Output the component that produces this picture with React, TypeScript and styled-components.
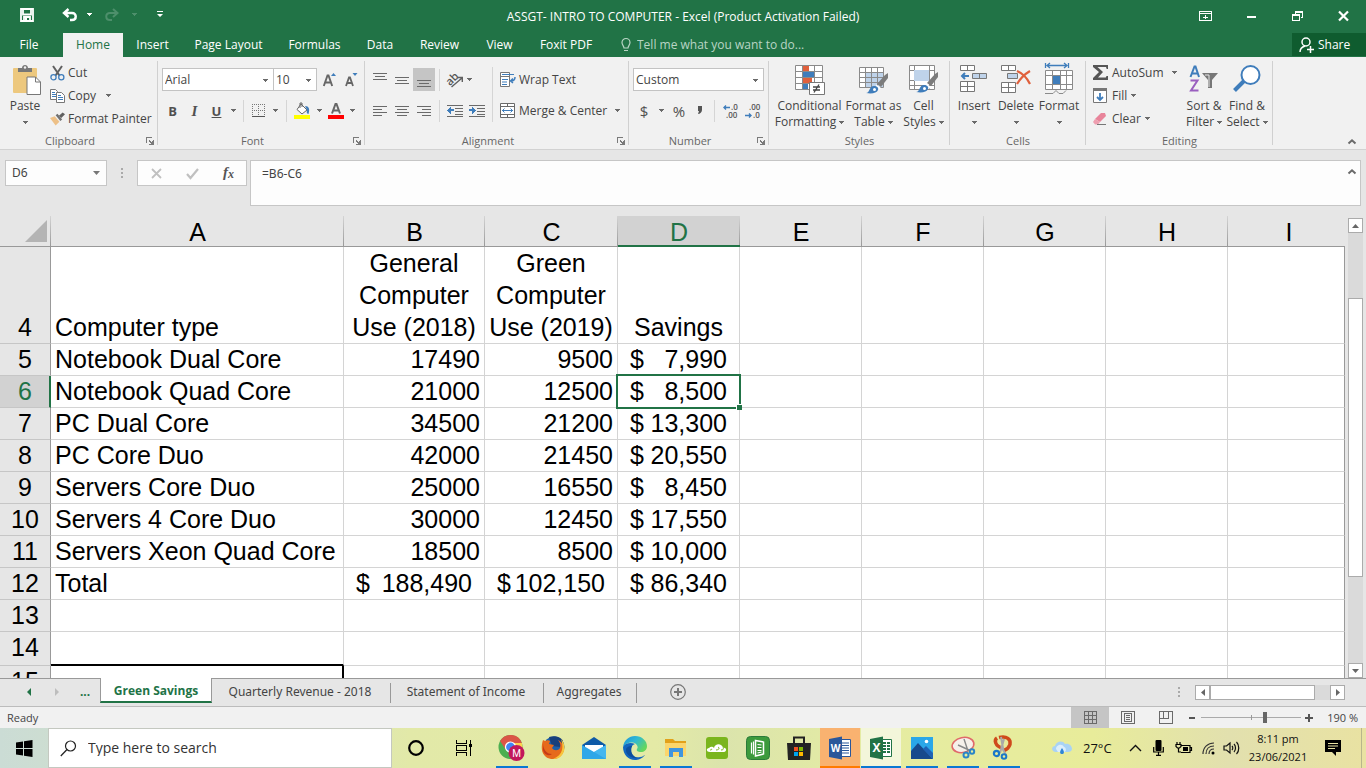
import React from "react";
import styled, { createGlobalStyle, css } from "styled-components";

const GREEN = "#217346";
const BLUE = "#3f7dbb";
const GREY = "#6a6a6a";

const Global = createGlobalStyle`
  *, *::before, *::after { box-sizing: border-box; }
  body { margin: 0; overflow: hidden; }
  button, input, select, textarea { font: inherit; color: inherit; margin: 0; padding: 0; border: 0; background: none; outline: none; border-radius: 0; }
  svg { display: block; flex: none; overflow: visible; }
`;

const Page = styled.div`
  display: flex;
  flex-direction: column;
  height: 100vh;
  background: #e6e6e6;
  color: #444;
  font: 12px/16px "Open Sans", "Noto Sans", sans-serif;
  white-space: nowrap;
`;

/* ---------- title bar and tabs ---------- */

const TitleBar = styled.header`
  display: grid;
  grid-template-columns: 1fr auto 1fr;
  align-items: center;
  height: 33px;
  background: ${GREEN};
  color: #fff;
`;
const QuickAccess = styled.div`
  display: flex;
  align-items: center;
  padding-bottom: 4px;
`;
const Title = styled.h1`
  margin: 0;
  font: 400 12px/16px "Open Sans", sans-serif;
`;
const WindowButtons = styled.div`
  display: flex;
  justify-content: flex-end;
  padding-bottom: 2px;
`;
const IconButton = styled.button<{ $w?: number; $h?: number; $on?: boolean }>`
  display: flex;
  align-items: center;
  justify-content: center;
  flex: none;
  width: ${(p) => p.$w ?? 22}px;
  height: ${(p) => p.$h ?? 23}px;
  background: ${(p) => (p.$on ? "#c5c5c5" : "none")};
`;
const TabBar = styled.nav`
  display: flex;
  height: 24px;
  background: ${GREEN};
  color: #fff;
`;
const RibbonTab = styled.button<{ $w: number; $active?: boolean }>`
  width: ${(p) => p.$w}px;
  height: 24px;
  text-align: center;
  ${(p) => p.$active && css`margin-left: 5px; background: #f1f1f1; color: ${GREEN};`}
`;
const TellMe = styled.label`
  display: flex;
  align-items: center;
  gap: 6px;
  flex: 1;
  padding-left: 15px;
  color: #b9d5c5;
  input { width: 200px; }
  input::placeholder { color: #b9d5c5; opacity: 1; }
`;
const Share = styled.button`
  display: flex;
  align-items: center;
  gap: 4px;
  width: 74px;
  padding-left: 7px;
  height: 23px;
  background: #0f5c2f;
`;

/* ---------- ribbon ---------- */

const Ribbon = styled.section`
  display: flex;
  height: 93px;
  background: #f1f1f1;
  border-bottom: 1px solid #d2d2d2;
`;
const GroupBox = styled.div<{ $w: number }>`
  display: flex;
  flex-direction: column;
  flex: none;
  width: ${(p) => p.$w}px;
  padding-top: 4px;
  background: linear-gradient(#d0d0d0, #d0d0d0) right 4px / 1px 84px no-repeat;
`;
const GroupBody = styled.div`
  display: flex;
  flex: 1;
  padding-left: 4px;
`;
const GroupFoot = styled.div`
  display: flex;
  align-items: center;
  height: 16px;
  color: #666;
  font-size: 11px;
  text-align: center;
  span { flex: 1; }
`;
const Launcher = styled.button`
  width: 12px;
  height: 9px;
  margin-left: 6px;
`;
const Rows = styled.div<{ $top?: number; $gap?: number; $left?: number; $w?: number }>`
  display: flex;
  flex-direction: column;
  width: ${(p) => (p.$w ? p.$w + "px" : "auto")};
  padding-top: ${(p) => p.$top ?? 0}px;
  padding-left: ${(p) => p.$left ?? 0}px;
  gap: ${(p) => p.$gap ?? 0}px;
`;
const Row = styled.div`
  display: flex;
  align-items: center;
  height: 23px;
`;
const Rule = styled.span<{ $m: string; $h?: number }>`
  flex: none;
  width: 1px;
  height: ${(p) => p.$h ?? 22}px;
  margin: ${(p) => p.$m};
  background: #d5d5d5;
`;
const TextButton = styled.button<{ $gap?: number }>`
  display: flex;
  align-items: center;
  height: 23px;
  gap: ${(p) => p.$gap ?? 4}px;
`;
const BigButton = styled.button<{ $w: number }>`
  display: flex;
  flex-direction: column;
  align-items: center;
  flex: none;
  width: ${(p) => p.$w}px;
  height: 72px;
  padding-top: 1px;
  line-height: 16px;
`;
const BigIcon = styled.span<{ $top?: number }>`
  display: flex;
  height: 36px;
  padding-top: ${(p) => p.$top ?? 3}px;
`;
const WithCaret = styled.span`
  display: flex;
  align-items: center;
  gap: 3px;
  height: 16px;
`;
const Combo = styled.label<{ $w: number; $join?: boolean }>`
  display: block;
  position: relative;
  flex: none;
  width: ${(p) => p.$w}px;
  height: 23px;
  margin-left: ${(p) => (p.$join ? -1 : 0)}px;
  border: 1px solid #c3c3c3;
  background: #fff;
  select { width: 100%; height: 21px; padding-left: 2px; appearance: none; }
  svg { position: absolute; right: 5px; top: 10px; pointer-events: none; }
`;
const Letter = styled.button<{ $w: number; $kind: "b" | "i" | "u" | "plain" }>`
  width: ${(p) => p.$w}px;
  height: 22px;
  font-size: 13px;
  color: #505050;
  font-weight: ${(p) => (p.$kind === "plain" ? 400 : 700)};
  ${(p) => p.$kind === "i" && css`font-family: "Liberation Serif", serif; font-style: italic; font-size: 15px;`}
  ${(p) => p.$kind === "u" && css`text-decoration: underline;`}
  ${(p) => p.$kind === "plain" && css`font-size: 15px;`}
`;
const Spacer = styled.div`
  flex: 1;
`;
const Collapse = styled.div`
  display: flex;
  flex: 1;
  align-items: flex-end;
  justify-content: flex-end;
  padding: 0 4px 1px 0;
`;

const Caret = ({ c = "#6a6a6a" }: { c?: string }) => (
  <svg width="5" height="3" viewBox="0 0 5 3" shapeRendering="crispEdges"><path d="M0 0h5v1H4v1H3v1H2V2H1V1H0z" fill={c} /></svg>
);
const CaretButton = ({ w = 12, label, c }: { w?: number; label: string; c?: string }) => (
  <IconButton $w={w} aria-label={label}><Caret c={c} /></IconButton>
);
const ChevronUp = () => (
  <svg width="10" height="7" viewBox="0 0 10 7"><path d="M1.500 5.500L5 2.300l3.500 3.200" fill="none" stroke="#6a6a6a" strokeWidth="2" /></svg>
);

function Group({ name, w, launcher, children }: { name: string; w: number; launcher?: boolean; children: React.ReactNode }) {
  return (
    <GroupBox $w={w}>
      <GroupBody>{children}</GroupBody>
      <GroupFoot>
        <span>{name}</span>
        {launcher && (
          <Launcher aria-label={name + " settings"}>
            <svg width="8" height="8" viewBox="0 0 8 8" shapeRendering="crispEdges">
              <path d="M0 0h6v1H1v5H0zM3 3h1v1h1v1h1V4h1V3h1v5H3V7h2V6H4V5H3z" fill="#7a7a7a" />
            </svg>
          </Launcher>
        )}
      </GroupFoot>
    </GroupBox>
  );
}

/* line-set icons for alignment and indent: [x, y, width] per line */
const Lines = ({ w = 14, h = 14, set, children }: { w?: number; h?: number; set: number[][]; children?: React.ReactNode }) => (
  <svg width={w} height={h} viewBox={`0 0 ${w} ${h}`} shapeRendering="crispEdges">
    {set.map(([x, y, l], i) => <rect key={i} x={x} y={y} width={l} height="1" fill="#6a6a6a" />)}
    {children}
  </svg>
);

const Brush = ({ x, y }: { x: number; y: number }) => (
  <g transform={`translate(${x} ${y})`}>
    <path d="M22 0v5l-7 9-4-3L19 2z" fill="#7c7c7c" />
    <path d="M10.500 11.500l4.500 3.500-2 2-4-3z" fill="#fff" />
    <path d="M0 20c4 0 3-7 8-7 3 0 5 2 4 4-1 3-6 4-12 3z" fill={BLUE} />
    <circle cx="8.500" cy="16.500" r="1.500" fill="#fff" />
  </g>
);

const PasteIcon = () => (
  <svg width="33" height="31" viewBox="-4 0 33 31">
    <rect x="0" y="3" width="24" height="25" rx="1" fill="#edc87e" />
    <path d="M5 7V3h4c0-4 6-4 6 0h4v4z" fill="#777" /><circle cx="12" cy="2.500" r="1.200" fill="#f1f1f1" />
    <path d="M14 12h8.500l5 5v12.500H14z" fill="#fff" stroke="#777" /><path d="M22.500 12v5h5" fill="none" stroke="#777" />
  </svg>
);
const CutIcon = () => (
  <svg width="15" height="16" viewBox="0 0 15 16" fill="none">
    <path d="M3 1l6.500 9.500M12 1L5.500 10.500" stroke="#606060" strokeWidth="2" />
    <circle cx="3.500" cy="12.300" r="2.600" stroke={BLUE} strokeWidth="1.300" /><circle cx="11.300" cy="12.300" r="2.600" stroke={BLUE} strokeWidth="1.300" />
  </svg>
);
const CopyIcon = () => (
  <svg width="15" height="14" viewBox="0 0 15 14">
    <path d="M.5.500h5l2 2v8h-7z" fill="#fff" stroke="#777" />
    <path d="M2 3.500h3M2 5.500h4M2 7.500h4" stroke={BLUE} />
    <path d="M6.500 3.500h5l3 3v7h-8z" fill="#fff" stroke="#777" />
    <path d="M8 6.500h3M8 8.500h5M8 10.500h5" stroke={BLUE} />
  </svg>
);
const PainterIcon = () => (
  <svg width="15" height="14" viewBox="0 0 16 14">
    <path d="M0 6l5-2 5 6-4 4z" fill="#edc087" /><path d="M6 3l2-1.500 5 6L11 9z" fill="#707070" />
    <path d="M9.500 3.500l4-3.500L16 2l-4 4z" fill="#606060" />
  </svg>
);
const GrowIcon = ({ small }: { small?: boolean }) => (
  <svg width="14" height="16" viewBox="0 0 14 16">
    {small
      ? <><path d="M1 14l3-8.500h1L8 14M2.300 11h4.500" fill="none" stroke="#666" strokeWidth="1.800" /><path d="M7.500 1h5L10 4z" fill={BLUE} /></>
      : <><path d="M.8 14L4.500 3.500h1L9.200 14M2.300 10.500h5.500" fill="none" stroke="#666" strokeWidth="1.900" /><path d="M8 4h5l-2.500-3z" fill={BLUE} /></>}
  </svg>
);
const BorderIcon = () => (
  <svg width="14" height="14" viewBox="0 0 14 14" shapeRendering="crispEdges">
    <path d="M0 .5h14M0 6.500h14M.5 0v13M6.500 0v13M12.500 0v13" stroke="#777" strokeDasharray="1 1" /><path d="M0 12h13v1H0z" fill="#555" />
  </svg>
);
const FillIcon = () => (
  <svg width="16" height="17" viewBox="0 0 16 17">
    <path d="M7 2l6 6-5 4-5-4.500z" fill="#fff" stroke="#666" /><path d="M6 6V1h2v4" fill="none" stroke="#666" />
    <path d="M11 4c4 0 5 3 3.500 8-2 0-2-3-1.500-4z" fill={BLUE} /><path d="M0 13h16v4H0z" fill="#ff0" />
  </svg>
);
const FontColorIcon = () => (
  <svg width="16" height="17" viewBox="0 0 16 17">
    <path d="M4 11.500L7.500 2h1L12 11.500M5.500 8.500h5" fill="none" stroke="#666" strokeWidth="2" /><path d="M0 13h16v4H0z" fill="red" />
  </svg>
);
const OrientIcon = () => (
  <svg width="18" height="18" viewBox="0 0 18 18">
    <text x="0" y="12" transform="rotate(-45 6 9)" fontFamily="Open Sans, sans-serif" fontSize="11" fontWeight="600" fill="#555">ab</text>
    <path d="M5.500 16L16 7M11.500 6.500H16.300V11" fill="none" stroke="#606060" strokeWidth="1.400" />
  </svg>
);
const IndentIcon = ({ right }: { right?: boolean }) => (
  <Lines w={16} h={14} set={[[0, 1, 16], [8, 4, 8], [8, 7, 8], [8, 10, 8], [0, 12, 16]]}>
    {right
      ? <path d="M0 5h3V3h1v1h1v1h1v1h1v1H6v1H5v1H4v1H3V7H0z" fill={BLUE} />
      : <path d="M7 5H4V3H3v1H2v1H1v1H0v1h1v1h1v1h1v1h1V7h3z" fill={BLUE} />}
  </Lines>
);
const WrapIcon = () => (
  <svg width="16" height="16" viewBox="0 0 16 16">
    <path d="M.5.500h9v14h-9z" fill="#fff" stroke="#777" /><path d="M0 4.500h10" stroke="#777" />
    <path d="M2 2.500h12M2 7.500h6M2 10h5M2 12.500h5" stroke={BLUE} /><path d="M15 5c0 3-1 4-4 4M13 6.500L10.500 9l2.500 2" fill="none" stroke={BLUE} strokeWidth="1.500" />
  </svg>
);
const MergeIcon = () => (
  <svg width="15" height="15" viewBox="0 0 15 15">
    <path d="M.5.500h14v14H.5zM.5 3.500h14M.5 11.500h14M7.500 0v3M7.500 12v3" fill="#fff" stroke="#6a6a6a" />
    <path d="M2 7.500h11M4.500 5.500l-2 2 2 2M10.500 5.500l2 2-2 2" fill="none" stroke={BLUE} />
  </svg>
);
const DecimalIcon = ({ dec }: { dec?: boolean }) => (
  <svg width="16" height="16" viewBox="0 0 16 16" fontFamily="Open Sans, sans-serif" fontSize="8" fontWeight="600" fill="#555">
    <text x={dec ? 4 : 8} y="7">{dec ? ".00" : ".0"}</text><text x={dec ? 8 : 3} y="15">{dec ? ".0" : ".00"}</text>
    {dec
      ? <path d="M0 12.500h6M4 10.500l2 2-2 2" fill="none" stroke={BLUE} strokeWidth="1.400" />
      : <path d="M7 4.500H1M3 2.500l-2 2 2 2" fill="none" stroke={BLUE} strokeWidth="1.400" />}
  </svg>
);
const CondIcon = () => (
  <svg width="30" height="31" viewBox="0 0 30 31">
    <path d="M.5.500h27v24H.5z" fill="#fff" />
    <path d="M8 1h6v5H8zM8 13h9v5H8z" fill="#e0603c" /><path d="M8 7h11v5H8zM8 19h5v5H8z" fill={BLUE} />
    <path d="M.5.500h27v24H.5zM.5 6.500h27M.5 12.500h27M.5 18.500h27M7.500 0v24M19.500 0v24" fill="none" stroke="#8a8a8a" />
    <path d="M14.500 17.500h15v12h-15z" fill="#fff" stroke="#777" /><path d="M18 22h7M18 25h7M24 19.500l-5 8" stroke="#444" strokeWidth="1.300" />
  </svg>
);
const TableFormatIcon = () => (
  <svg width="29" height="31" viewBox="0 0 29 31">
    <path d="M.5 2.500h24v20H.5z" fill="#fff" /><path d="M7 7h17v15H7z" fill="#bfd3ea" />
    <path d="M.5 2.500h24v20H.5zM.5 7.500h24M.5 12.500h24M.5 17.500h24M6.500 2v20M12.500 2v20M18.500 2v20" fill="none" stroke="#8a8a8a" />
    <Brush x={7} y={8} />
  </svg>
);
const CellStylesIcon = () => (
  <svg width="29" height="31" viewBox="0 0 29 31">
    <path d="M.5.500h25v24H.5z" fill="#fff" /><path d="M.5.500h25v24H.5zM.5 5.500h25M.5 15.500h25M.5 20.500h25M5.500 0v24M20.500 0v24" fill="none" stroke="#8a8a8a" />
    <path d="M5 5h15v11H5z" fill="#bfd3ea" /><Brush x={7} y={7} />
  </svg>
);
const InsertIcon = () => (
  <svg width="28" height="28" viewBox="0 0 28 28">
    <path d="M.5.500h14v5H.5zM7.500 0v5M.5 16.500h14v10H.5zM.5 21.500h14M7.500 16v10" fill="#fff" stroke="#777" />
    <path d="M12.500 8.500h14v5h-14zM19.500 8v5" fill="#bfd3ea" stroke="#777" /><path d="M9 11H2M5 8l-3 3 3 3" fill="none" stroke={BLUE} strokeWidth="2" />
  </svg>
);
const DeleteIcon = () => (
  <svg width="31" height="28" viewBox="0 0 31 28">
    <path d="M.5.500h14v5H.5zM7.500 0v5M.5 17.500h14v10H.5zM.5 22.500h14M7.500 17v10" fill="#fff" stroke="#777" />
    <path d="M6.500 8.500h10v5h-10z" fill="#bfd3ea" stroke="#777" />
    <path d="M16 6c5 2 10 7 13 13M29 6c-5 3-10 8-13 13" fill="none" stroke="#e0603c" strokeWidth="2.200" />
  </svg>
);
const FormatIcon = () => (
  <svg width="29" height="33" viewBox="0 0 29 33">
    <path d="M.5 0v5M23.500 0v5M2 2.500h20M5 0L2 2.500 5 5M19 0l3 2.500L19 5" fill="none" stroke={BLUE} strokeWidth="1.300" />
    <path d="M.5 7.500h27v19H.5z" fill="#fff" /><path d="M8 12h8v9H8z" fill={BLUE} />
    <path d="M.5 7.500h27v19H.5zM.5 12.500h27M.5 21.500h27M7.500 7v19M15.500 7v19M21.500 7v19M0 30.500h8l3-3 3 3h4l3-3" fill="none" stroke="#8a8a8a" />
  </svg>
);
const SigmaIcon = () => (
  <svg width="15" height="15" viewBox="0 0 15 15"><path d="M15 4V0H0v2l6 5-6 6v2h15v-4h-1.500l-.7 1.500H5L10 7 4.500 2h8.500l.7 2z" fill="#555" /></svg>
);
const FillDownIcon = () => (
  <svg width="15" height="15" viewBox="0 0 15 15">
    <path d="M.5.500h13v14H.5z" fill="#fff" stroke="#777" /><path d="M0 0h14v3H0z" fill="#777" />
    <path d="M7 5v7M4 9l3 3 3-3" fill="none" stroke={BLUE} strokeWidth="1.800" />
  </svg>
);
const EraserIcon = () => (
  <svg width="15" height="14" viewBox="0 0 15 14">
    <path d="M8 1h4l1 3-6 6-5-3z" fill="#e8849a" /><path d="M2 7l5 3-2 2.500H2L0 10z" fill="#ee9fb0" /><path d="M4 12.500h9" stroke="#777" />
  </svg>
);
const SortIcon = () => (
  <svg width="30" height="28" viewBox="0 0 30 28" fill="none">
    <path d="M1.500 12L5.500 1.500h1L10 12M3 8.500h6" stroke={BLUE} strokeWidth="2" />
    <path d="M1.500 15.500h7L2 25.500h7.500" stroke="#9a5fbf" strokeWidth="2" />
    <path d="M13 8h16l-6 7v8h-4v-8z" fill="#777" /><path d="M16 10h4v12" stroke="#e8e8e8" />
  </svg>
);
const FindIcon = () => (
  <svg width="28" height="28" viewBox="0 0 28 28">
    <path d="M11 16L1.500 25.500" stroke={BLUE} strokeWidth="4" /><circle cx="17.500" cy="10" r="9" fill="#fff" stroke={BLUE} strokeWidth="2" />
  </svg>
);

/* ---------- formula bar ---------- */

const FormulaBar = styled.section`
  display: flex;
  align-items: flex-start;
  height: 66px;
  padding: 10px 5px 0;
  font-family: "Noto Sans", sans-serif;
`;
const NameBox = styled.div`
  display: flex;
  align-items: center;
  width: 102px;
  height: 26px;
  padding: 0 6px 0 6px;
  border: 1px solid #c6c6c6;
  background: #fdfdfd;
  input { flex: 1; min-width: 0; }
`;
const Dots = styled.span<{ $m: string }>`
  width: 2px;
  height: 11px;
  margin: ${(p) => p.$m};
  background: repeating-linear-gradient(#aaa 0 2px, transparent 2px 4px);
`;
const FormulaButtons = styled.div`
  display: flex;
  align-items: center;
  width: 110px;
  height: 26px;
  border: 1px solid #c6c6c6;
  background: #fdfdfd;
`;
const FormulaField = styled.div`
  display: flex;
  flex: 1;
  align-items: flex-start;
  height: 46px;
  margin-left: 3px;
  padding: 5px 3px 0 11px;
  border: 1px solid #c6c6c6;
  background: #fdfdfd;
  input { flex: 1; min-width: 0; height: 16px; }
  svg { margin-top: 2px; }
`;

/* ---------- worksheet ---------- */

const Workspace = styled.main`
  display: flex;
  flex: 1;
  min-height: 0;
`;
const SheetClip = styled.div`
  flex: 1;
  min-width: 0;
  overflow: hidden;
`;
const Sheet = styled.table`
  width: 100%;
  table-layout: fixed;
  border-collapse: separate;
  border-spacing: 0;
  background: #fff;
  color: #000;
  font: 25px/31px "Liberation Sans", Arial, sans-serif;
`;
const ColHead = styled.th<{ $sel?: boolean; $last?: boolean }>`
  height: 31px;
  padding: ${(p) => (p.$last ? "2px 0 0 5px" : "2px 0 0")};
  font-weight: 400;
  line-height: 28px;
  border-bottom: 1px solid #999;
  background: ${(p) => (p.$last ? "none" : "linear-gradient(#d4d4d4, #999) right / 1px 100% no-repeat")} #e6e6e6;
  ${(p) => p.$sel && css`
    padding-top: 3px;
    line-height: 26px;
    background-color: #d2d2d2;
    color: ${GREEN};
    border-bottom: 2px solid ${GREEN};
  `}
`;
const RowHead = styled.th<{ $h: number; $sel?: boolean }>`
  height: ${(p) => p.$h}px;
  padding: 0;
  font-weight: 400;
  vertical-align: ${(p) => (p.$h < 40 ? "top" : "bottom")};
  background: #e6e6e6;
  border-right: 1px solid #999;
  border-bottom: 1px solid #c6c6c6;
  ${(p) => p.$sel && css`
    padding-left: 1px;
    background: #d2d2d2;
    color: ${GREEN};
    border-right: 2px solid ${GREEN};
  `}
`;
const Cell = styled.td<{ $align?: string; $thickBottom?: boolean; $thickRight?: boolean }>`
  position: relative;
  padding: 0 4px;
  vertical-align: bottom;
  text-align: ${(p) => p.$align ?? "left"};
  border-right: ${(p) => (p.$thickRight ? "2px solid #000" : "1px solid #d4d4d4")};
  border-bottom: ${(p) => (p.$thickBottom ? "2px solid #000" : "1px solid #d4d4d4")};
  &:last-child { border-right-color: #999; }
`;
const HeadingText = styled.div`
  margin: 0 -4px;
  line-height: 32px;
  white-space: pre-line;
`;
const Money = styled.div`
  display: flex;
  justify-content: space-between;
  padding: 0 8px;
`;
const Selection = styled.div`
  position: absolute;
  z-index: 1;
  inset: -2px;
  border: 2px solid ${GREEN};
  pointer-events: none;
  &::after {
    content: "";
    position: absolute;
    right: -3px;
    bottom: -3px;
    width: 6px;
    height: 6px;
    background: ${GREEN};
    border: solid #fff;
    border-width: 1px 0 0 1px;
  }
`;
const VScroll = styled.div`
  display: flex;
  flex-direction: column;
  flex: none;
  width: 15px;
  margin: 2px 3px 0;
  background: #dadada;
`;
const ScrollButton = styled.button`
  display: flex;
  align-items: center;
  justify-content: center;
  flex: none;
  width: 15px;
  height: 15px;
  border: 1px solid #ababab;
  background: #fff;
`;
const Thumb = styled.div<{ $dir: "v" | "h" }>`
  border: 1px solid #ababab;
  background: #fff;
  ${(p) => (p.$dir === "v" ? css`flex: 279 0 0;` : css`width: 105px;`)}
`;
const Gap = styled.div<{ $f: number }>`
  flex: ${(p) => p.$f} 0 0;
`;

type RowData = { n: number; cells: [string, string, string, string] };
const rows: RowData[] = [
  { n: 5, cells: ["Notebook Dual Core", "17490", "9500", "7,990"] },
  { n: 6, cells: ["Notebook Quad Core", "21000", "12500", "8,500"] },
  { n: 7, cells: ["PC Dual Core", "34500", "21200", "13,300"] },
  { n: 8, cells: ["PC Core Duo", "42000", "21450", "20,550"] },
  { n: 9, cells: ["Servers Core Duo", "25000", "16550", "8,450"] },
  { n: 10, cells: ["Servers 4 Core Duo", "30000", "12450", "17,550"] },
  { n: 11, cells: ["Servers Xeon Quad Core", "18500", "8500", "10,000"] },
  { n: 12, cells: ["Total", "188,490", "102,150", "86,340"] },
];
const columns = ["A", "B", "C", "D", "E", "F", "G", "H", "I"];
const widths = [51, 293, 141, 133, 122, 122, 122, 122, 122];
const blanks = (n: number) => Array.from({ length: n }, (_, i) => <Cell key={"blank" + i} />);

const Amount = ({ v }: { v: string }) =>
  v.includes(",") ? <Money><span>$</span><span>{v}</span></Money> : <>{v}</>;

function Worksheet() {
  return (
    <Sheet>
      <colgroup>
        {widths.map((w, i) => <col key={i} width={w} />)}
        <col />
      </colgroup>
      <thead>
        <tr>
          <ColHead>
            <svg width="48" height="28" viewBox="0 0 48 28"><path d="M47 2v22H25z" fill="#b4b4b4" /></svg>
          </ColHead>
          {columns.map((c) => <ColHead key={c} scope="col" $sel={c === "D"} $last={c === "I"}>{c}</ColHead>)}
        </tr>
      </thead>
      <tbody>
        <tr>
          <RowHead scope="row" $h={97}>4</RowHead>
          <Cell>Computer type</Cell>
          <Cell $align="center"><HeadingText>{"General\nComputer\nUse (2018)"}</HeadingText></Cell>
          <Cell $align="center"><HeadingText>{"Green\nComputer\nUse (2019)"}</HeadingText></Cell>
          <Cell $align="center">Savings</Cell>
          {blanks(5)}
        </tr>
        {rows.map((r) => (
          <tr key={r.n}>
            <RowHead scope="row" $h={32} $sel={r.n === 6}>{r.n}</RowHead>
            <Cell>{r.cells[0]}</Cell>
            <Cell $align="right"><Amount v={r.cells[1]} /></Cell>
            <Cell $align="right"><Amount v={r.cells[2]} /></Cell>
            <Cell><Amount v={r.cells[3]} />{r.n === 6 && <Selection />}</Cell>
            {blanks(5)}
          </tr>
        ))}
        <tr><RowHead scope="row" $h={32}>13</RowHead>{blanks(9)}</tr>
        <tr><RowHead scope="row" $h={34}>14</RowHead><Cell $thickBottom />{blanks(8)}</tr>
        <tr><RowHead scope="row" $h={32}>15</RowHead><Cell $thickRight />{blanks(8)}</tr>
      </tbody>
    </Sheet>
  );
}

/* ---------- sheet tabs and status ---------- */

const SheetBar = styled.nav`
  display: flex;
  align-items: flex-start;
  flex: none;
  height: 29px;
  border-top: 1px solid #999;
  border-bottom: 1px solid #bcbcbc;
  font-family: "Noto Sans", sans-serif;
`;
const SheetNav = styled.div`
  display: flex;
  align-items: center;
  width: 100px;
  height: 25px;
  padding-left: 15px;
  color: ${GREEN};
  font-weight: 700;
`;
const SheetTab = styled.button<{ $w: number; $active?: boolean }>`
  flex: none;
  width: ${(p) => p.$w}px;
  height: 24px;
  padding: 1px 3px 0 0;
  background: linear-gradient(#999, #999) right 4px / 1px 20px no-repeat;
  ${(p) => p.$active && css`
    height: 25px;
    margin-top: -1px;
    padding: 3px 0 0;
    color: ${GREEN};
    font-family: "Open Sans", sans-serif;
    font-weight: 700;
    background: #fff;
    border: 1px solid #999;
    border-top: 0;
    border-bottom: 2px solid ${GREEN};
  `}
`;
const HScroll = styled.div`
  display: flex;
  width: 150px;
  height: 15px;
  margin: 6px 21px 0 15px;
  background: #dadada;
`;
const StatusBar = styled.footer`
  display: flex;
  align-items: center;
  flex: none;
  height: 21px;
  padding: 0 8px 0 7px;
  background: #f1f1f1;
  font-size: 11px;
`;
const Zoom = styled.input`
  width: 100px;
  height: 13px;
  margin: 0 3px;
  appearance: none;
  background:
    linear-gradient(#999, #999) 50px 4px / 1px 5px no-repeat,
    linear-gradient(#aaa, #aaa) 0 6px / 100% 1px no-repeat;
  &::-webkit-slider-thumb { appearance: none; width: 4px; height: 11px; background: #666; }
`;
const ZoomValue = styled.span`
  width: 44px;
  text-align: right;
`;

/* ---------- taskbar ---------- */

const Taskbar = styled.footer`
  display: flex;
  flex: none;
  height: 40px;
  color: #111;
  background: linear-gradient(90deg, #cbdcd5 0, #d6e3c0 20%, #e2e9a8 30%, #e4eaa6 48%, #dbe4ac 53%, #e5eca2 64%, #e8ec9a 80%, #e2e0ae 90%, #e9e2a2 100%);
`;
const TaskButton = styled.button<{ $w?: number; $line?: string; $full?: boolean; $bg?: string }>`
  display: flex;
  align-items: center;
  justify-content: center;
  flex: none;
  width: ${(p) => p.$w ?? 41}px;
  height: 40px;
  background:
    ${(p) => (p.$line ? `linear-gradient(${p.$line}, ${p.$line}) center bottom / ${p.$full ? 40 : 32}px 2px no-repeat,` : "")}
    ${(p) => (p.$bg ? `linear-gradient(${p.$bg}, ${p.$bg}) center / 40px 100% no-repeat` : "none")};
`;
const Apps = styled.div`
  display: flex;
  padding-left: 3px;
`;
const Search = styled.label`
  display: flex;
  align-items: center;
  gap: 11px;
  flex: none;
  width: 344px;
  height: 40px;
  padding-left: 11px;
  border: 1px solid #c4c8c0;
  background: #fff;
  input { flex: 1; font-size: 14px; }
  input::placeholder { color: #333; opacity: 1; }
`;
const Tray = styled.div`
  display: flex;
  align-items: center;
`;
const Weather = styled.button`
  display: flex;
  align-items: center;
  gap: 11px;
  width: 74px;
  font-size: 13px;
`;
const Clock = styled.button`
  width: 72px;
  font-size: 11px;
  line-height: 18px;
`;
const ShowDesktop = styled.button`
  width: 5px;
  height: 40px;
  margin-left: 9px;
  border-left: 1px solid #b8b68c;
`;

const svgProps = { width: 24, height: 24, viewBox: "0 0 24 24" };
const ChromeIcon = () => (
  <svg width="28" height="26" viewBox="0 0 28 26">
    <circle cx="12.500" cy="12" r="12" fill="#4caf50" />
    <path d="M2.100 6A12 12 0 0 1 24 8.500H12L8 15z" fill="#db5547" />
    <path d="M23.800 8A12 12 0 0 1 12.500 24l5.500-10-2-6z" fill="#fdd14d" />
    <circle cx="12.500" cy="12" r="5.600" fill="#fff" /><circle cx="12.500" cy="12" r="4.400" fill="#4285f4" />
    <circle cx="18.500" cy="18" r="8" fill="#c2185b" />
    <text x="18.500" y="21.500" textAnchor="middle" fontFamily="Roboto, sans-serif" fontSize="10" fill="#fff">M</text>
  </svg>
);
const FirefoxIcon = () => (
  <svg {...svgProps}>
    <circle cx="13" cy="11" r="10.500" fill="#1d5fa8" /><path d="M8 1c6-2 12 0 14 4l-3 6-8-1z" fill="#173f7c" />
    <path d="M2 4l2 1c2-1 4-1 5 0L8 8l5 1-2 3c2 3 6 3 8 0 1-3 0-6-2-8 5 2 7 8 5 13-3 6-11 8-17 4C0 17 0 10 2 4z" fill="#e66a1c" />
    <path d="M20 3c4 4 5 11 1 16-2 3-6 4-9 4 5-2 8-5 9-9 1-4 0-8-1-11z" fill="#f9c53b" />
    <path d="M2 7c0 6 3 11 9 11-4 3-8 0-9-4z" fill="#c53a18" />
  </svg>
);
const MailIcon = () => (
  <svg {...svgProps}><path d="M0 9l12-8 12 8v14H0z" fill="#0e5aa7" /><path d="M3 9h18v9H3z" fill="#fff" /><path d="M0 9l12 7 12-7v14H0z" fill="#2ea7e8" /><path d="M12 16l12-7v14z" fill="#50bdf2" opacity=".7" /></svg>
);
const EdgeIcon = () => (
  <svg {...svgProps}>
    <defs><linearGradient id="edge" x1="0" y1="0" x2="1" y2=".6"><stop offset="0" stopColor="#1c8fd8" /><stop offset=".5" stopColor="#2fb9d4" /><stop offset="1" stopColor="#65d75c" /></linearGradient></defs>
    <path d="M0 11C1 4 6 0 12 0c7 0 12 5 12 10 0 4-3 6-6 6-3 0-5-1-4-3 1-1 1-3-1-5-4-3-10-1-13 3z" fill="url(#edge)" />
    <path d="M0 11c2-4 8-5 12-3-3 1-5 4-4 8 1 4 5 6 9 5 3 0 4-2 5-2-3 4-7 5-10 5C5 24 0 18 0 11z" fill="#1266bf" />
    <path d="M9 10c-2 5 0 11 6 12-6 1-12-3-12-8 0-3 3-4 6-4z" fill="#0d4f9e" />
  </svg>
);
const FolderIcon = () => (
  <svg width="22" height="20" viewBox="0 0 22 20"><path d="M0 1h8l2 2h11v5H0z" fill="#e2a11a" /><path d="M0 5h21v13H0z" fill="#fbd56b" /><path d="M4 19v-9h14v9h-4v-5H8v5z" fill="#3f95de" /></svg>
);
const CloudAppIcon = () => (
  <svg {...svgProps}><rect x="1" y="1" width="22" height="22" rx="3" fill="#7ab51d" /><path d="M4 12c2-2 4-1 5 0 1-5 8-5 9 0 4-1 4 4 1 4H5c-4 0-4-4-1-4z" fill="#fff" /><path d="M5 14c2 0 2-1 1-1M11 14c3 0 4-2 2-3M16 14c2 0 3-1 2-2" fill="none" stroke="#7ab51d" /></svg>
);
const BookIcon = () => (
  <svg {...svgProps}>
    <rect x=".5" y=".5" width="23" height="23" rx="4" fill="#3c9a3c" stroke="#2b7a3a" />
    <path d="M9.500 4.500l8 1.500v12l-8 2z" fill="#3c9a3c" stroke="#fff" strokeWidth="1.500" />
    <path d="M5.500 6.500v11M7.500 5.500v13M11.500 8.500l4 .5M11.500 11.500h4M11.500 14.500h4M11.500 17l4-1" fill="none" stroke="#fff" strokeWidth="1.200" />
  </svg>
);
const StoreIcon = () => (
  <svg {...svgProps}><path d="M7 8V1.500h10V8" fill="none" stroke="#222" strokeWidth="2" /><path d="M0 7h24l-1 17H1z" fill="#232323" /><path d="M7 11h4v4H7z" fill="#f25022" /><path d="M12 11h4v4h-4z" fill="#7fba00" /><path d="M7 16h4v4H7z" fill="#00a4ef" /><path d="M12 16h4v4h-4z" fill="#ffb900" /></svg>
);
const OfficeIcon = ({ letter, color }: { letter: string; color: string }) => (
  <svg {...svgProps}>
    <path d="M12 3.500h10.500v17H12z" fill="#fff" stroke={color} />
    {letter === "W"
      ? <path d="M14 7h7M14 9.500h7M14 12h7M14 14.500h7M14 17h7" stroke={color} strokeWidth="1.200" />
      : <path d="M14 7h3M18 7h3M14 10h3M18 10h3M14 13h3M18 13h3M14 16h3M18 16h3" stroke={color} strokeWidth="2" />}
    <path d="M1 3l13-2.500v23L1 21z" fill={color} />
    <text x="7.500" y="16" textAnchor="middle" fontFamily="Open Sans, sans-serif" fontWeight="700" fontSize={letter === "W" ? 10 : 12} fill="#fff">{letter}</text>
  </svg>
);
const PhotosIcon = () => (
  <svg {...svgProps}><path d="M1 1h22v22H1z" fill="#2aa7e8" /><path d="M1 15l7-8 15 16H1z" fill="#174a8c" /><path d="M13 13l3-3 7 7v6z" fill="#1e62b4" /><circle cx="16.500" cy="5.500" r="1.800" fill="#fff" /></svg>
);
const SnipIcon = () => (
  <svg {...svgProps}><ellipse cx="12" cy="9" rx="11" ry="7.500" transform="rotate(-12 12 9)" fill="#f6f0ea" stroke="#e06a6a" strokeWidth="1.600" /><path d="M13 3l4 12M7 9l11 5" stroke="#888" strokeWidth="1.400" /><circle cx="15" cy="19" r="2.500" fill="none" stroke="#2a86c8" strokeWidth="2" /><circle cx="21" cy="15.500" r="2.200" fill="none" stroke="#2a86c8" strokeWidth="2" /></svg>
);
const SnipSketchIcon = () => (
  <svg {...svgProps}>
    <path d="M10 12C3 10 2 4 5 2M7 1.500c8-2 12 2 11 7-1 3-3 5-6 6" fill="none" stroke="#cf4a1c" strokeWidth="3.500" />
    <path d="M9 1l2.500 14M12 3L8 17M9 10l5 9" stroke="#a9a9a9" strokeWidth="2" />
    <circle cx="4.500" cy="17.500" r="2.600" fill="none" stroke="#1c78c8" strokeWidth="2.200" /><circle cx="12" cy="20.500" r="2.300" fill="none" stroke="#1c78c8" strokeWidth="2" />
  </svg>
);

const run = "#0a78d4";
const tasks: { name: string; icon: React.ReactNode; line?: string; full?: boolean; bg?: string }[] = [
  { name: "Chrome", icon: <ChromeIcon />, line: run },
  { name: "Firefox", icon: <FirefoxIcon /> },
  { name: "Mail", icon: <MailIcon /> },
  { name: "Edge", icon: <EdgeIcon />, line: run },
  { name: "File Explorer", icon: <FolderIcon />, line: run },
  { name: "Cloud", icon: <CloudAppIcon /> },
  { name: "Reader", icon: <BookIcon /> },
  { name: "Store", icon: <StoreIcon /> },
  { name: "Word", icon: <OfficeIcon letter="W" color="#2b579a" />, line: "#ff7a00", full: true, bg: "#f9b270" },
  { name: "Excel", icon: <OfficeIcon letter="X" color={GREEN} />, line: run, full: true, bg: "#f3f6da" },
  { name: "Photos", icon: <PhotosIcon />, line: run },
  { name: "Snipping Tool", icon: <SnipIcon />, line: run },
  { name: "Snip & Sketch", icon: <SnipSketchIcon />, line: run },
];

const ribbonTabs: [string, number][] = [
  ["Insert", 59], ["Page Layout", 93], ["Formulas", 79], ["Data", 52], ["Review", 67], ["View", 53], ["Foxit PDF", 80],
];

export default function App() {
  return (
    <Page>
      <Global />
      <TitleBar>
        <QuickAccess>
          <IconButton $w={54} aria-label="Save">
            <svg width="14" height="14" viewBox="0 0 14 14"><path d="M1 1h12v12H1zM3 1v5.500h8V1M4 13V9h6v4" fill="none" stroke="#fff" strokeWidth="1.800" /><path d="M5 10h2v3H5z" fill="#fff" /></svg>
          </IconButton>
          <IconButton $w={32} aria-label="Undo">
            <svg width="16" height="14" viewBox="0 0 16 14"><path d="M2 5h8c5 0 5 7 0 7H8M6.500 1L2 5l4.500 4" fill="none" stroke="#fff" strokeWidth="2.400" /></svg>
          </IconButton>
          <CaretButton w={6} label="Undo list" c="#fff" />
          <IconButton $w={40} aria-label="Redo" disabled>
            <svg width="16" height="14" viewBox="0 0 16 14"><path d="M13 5H6c-5 0-5 7 0 7h2M9 1l4.500 4L9 9" fill="none" stroke="#4d8f6b" strokeWidth="2" /></svg>
          </IconButton>
          <CaretButton w={4} label="Redo list" c="#4d8f6b" />
          <IconButton $w={48} aria-label="Customize Quick Access Toolbar">
            <svg width="6" height="7" viewBox="0 0 6 7"><path d="M0 0h6v1H0zM0 3h6L3 6z" fill="#fff" /></svg>
          </IconButton>
        </QuickAccess>
        <Title>ASSGT- INTRO TO COMPUTER - Excel (Product Activation Failed)</Title>
        <WindowButtons>
          <IconButton $w={46} aria-label="Ribbon Display Options">
            <svg width="13" height="10" viewBox="0 0 13 10" shapeRendering="crispEdges"><path d="M.5.500h12v9H.5zM0 2.500h13M6.500 8V4M4 6h5" fill="none" stroke="#fff" /></svg>
          </IconButton>
          <IconButton $w={46} aria-label="Minimize"><svg width="9" height="5" viewBox="0 0 9 5"><path d="M0 3h9v2H0z" fill="#fff" /></svg></IconButton>
          <IconButton $w={46} aria-label="Restore">
            <svg width="11" height="10" viewBox="0 0 11 10" shapeRendering="crispEdges"><path d="M0 3h8v7H0zM1 5v4h6V5zM3 0h8v7H9V6h1V2H4v1H3z" fill="#fff" fillRule="evenodd" /></svg>
          </IconButton>
          <IconButton $w={46} aria-label="Close"><svg width="11" height="10" viewBox="0 0 11 10"><path d="M1 .5l9 9M10 .5l-9 9" stroke="#fff" strokeWidth="2.200" /></svg></IconButton>
        </WindowButtons>
      </TitleBar>

      <TabBar>
        <RibbonTab $w={58}>File</RibbonTab>
        <RibbonTab $w={60} $active>Home</RibbonTab>
        {ribbonTabs.map(([t, w]) => <RibbonTab key={t} $w={w}>{t}</RibbonTab>)}
        <TellMe>
          <svg width="10" height="14" viewBox="0 0 10 14"><path d="M3 10C3 8 1 7 1 4.500a4 4 0 0 1 8 0C9 7 7 8 7 10zM3 12.500h4" fill="none" stroke="#b9d5c5" strokeWidth="1.200" /></svg>
          <input aria-label="Tell me what you want to do" placeholder="Tell me what you want to do..." />
        </TellMe>
        <Share>
          <svg width="15" height="16" viewBox="0 0 15 16"><circle cx="7" cy="5" r="4" fill="none" stroke="#fff" strokeWidth="1.500" /><path d="M1 15c0-4 2-5 5-6M8 12.500h7M11.500 9v7" fill="none" stroke="#fff" strokeWidth="1.500" /></svg>
          Share
        </Share>
      </TabBar>

      <Ribbon>
        <Group name="Clipboard" w={158} launcher>
          <BigButton $w={42}>
            <BigIcon><PasteIcon /></BigIcon>
            <span>Paste</span>
            <WithCaret><Caret /></WithCaret>
          </BigButton>
          <Rows $left={4}>
            <TextButton $gap={3}><CutIcon />Cut</TextButton>
            <Row><TextButton $gap={3}><CopyIcon />Copy</TextButton><CaretButton w={25} label="Copy options" /></Row>
            <TextButton $gap={3}><PainterIcon />Format Painter</TextButton>
          </Rows>
        </Group>

        <Group name="Font" w={207} launcher>
          <Rows $top={7} $gap={8}>
            <Row>
              <Combo $w={112}><select aria-label="Font"><option>Arial</option></select><Caret /></Combo>
              <Combo $w={44} $join><select aria-label="Font size"><option>10</option></select><Caret /></Combo>
              <IconButton $w={25} aria-label="Increase font size"><GrowIcon /></IconButton>
              <IconButton $w={20} aria-label="Decrease font size"><GrowIcon small /></IconButton>
            </Row>
            <Row>
              <Letter $w={21} $kind="b">B</Letter>
              <Letter $w={23} $kind="i">I</Letter>
              <Letter $w={21} $kind="u">U</Letter>
              <CaretButton label="Underline options" />
              <Rule $m="0 5px 0 4px" />
              <IconButton $w={20} aria-label="Borders"><BorderIcon /></IconButton>
              <CaretButton label="Border options" />
              <Rule $m="0 4px 0 5px" />
              <IconButton $w={22} aria-label="Fill color"><FillIcon /></IconButton>
              <CaretButton label="Fill options" />
              <IconButton $w={22} aria-label="Font color"><FontColorIcon /></IconButton>
              <CaretButton w={10} label="Font color options" />
            </Row>
          </Rows>
        </Group>

        <Group name="Alignment" w={264} launcher>
          <Rows $top={7} $gap={8}>
            <Row>
              <IconButton aria-label="Top align"><Lines set={[[0, 0, 14], [2, 3, 10], [0, 6, 14]]} /></IconButton>
              <IconButton aria-label="Middle align"><Lines set={[[0, 4, 14], [2, 7, 10], [0, 10, 14]]} /></IconButton>
              <IconButton $on aria-label="Bottom align"><Lines set={[[0, 7, 14], [2, 10, 10], [0, 13, 14]]} /></IconButton>
              <Rule $m="0 4px" />
              <IconButton aria-label="Orientation"><OrientIcon /></IconButton>
              <CaretButton w={6} label="Orientation options" />
            </Row>
            <Row>
              <IconButton aria-label="Align left"><Lines set={[[0, 2, 14], [0, 5, 9], [0, 8, 14], [0, 11, 9]]} /></IconButton>
              <IconButton aria-label="Center"><Lines set={[[0, 2, 14], [2, 5, 10], [0, 8, 14], [2, 11, 10]]} /></IconButton>
              <IconButton aria-label="Align right"><Lines set={[[0, 2, 14], [5, 5, 9], [0, 8, 14], [5, 11, 9]]} /></IconButton>
              <Rule $m="0 4px" />
              <IconButton aria-label="Decrease indent"><IndentIcon /></IconButton>
              <IconButton aria-label="Increase indent"><IndentIcon right /></IconButton>
            </Row>
          </Rows>
          <Rule $m="6px 7px 0 4px" $h={55} />
          <Rows $top={7} $gap={8}>
            <TextButton $gap={3}><WrapIcon />Wrap Text</TextButton>
            <Row><TextButton><MergeIcon />Merge &amp; Center</TextButton><CaretButton w={20} label="Merge options" /></Row>
          </Rows>
        </Group>

        <Group name="Number" w={140} launcher>
          <Rows $top={7} $gap={8}>
            <Combo $w={131}><select aria-label="Number format"><option>Custom</option></select><Caret /></Combo>
            <Row>
              <Letter $w={22} $kind="plain">$</Letter>
              <CaretButton label="Currency options" />
              <Letter $w={24} $kind="plain">%</Letter>
              <IconButton $w={18} aria-label="Comma style"><svg width="6" height="9" viewBox="0 0 6 9"><path d="M1 0h4v4c0 2-2 4-4 4l1-3H1z" fill="#555" /></svg></IconButton>
              <Rule $m="0 5px" />
              <IconButton aria-label="Increase decimal"><DecimalIcon /></IconButton>
              <IconButton aria-label="Decrease decimal"><DecimalIcon dec /></IconButton>
            </Row>
          </Rows>
        </Group>

        <Group name="Styles" w={181}>
          <BigButton $w={73}><BigIcon><CondIcon /></BigIcon><span>Conditional</span><WithCaret>Formatting<Caret /></WithCaret></BigButton>
          <BigButton $w={55}><BigIcon><TableFormatIcon /></BigIcon><span>Format as</span><WithCaret>Table<Caret /></WithCaret></BigButton>
          <BigButton $w={45}><BigIcon><CellStylesIcon /></BigIcon><span>Cell</span><WithCaret>Styles<Caret /></WithCaret></BigButton>
        </Group>

        <Group name="Cells" w={136}>
          <BigButton $w={40}><BigIcon><InsertIcon /></BigIcon><span>Insert</span><WithCaret><Caret /></WithCaret></BigButton>
          <BigButton $w={44}><BigIcon><DeleteIcon /></BigIcon><span>Delete</span><WithCaret><Caret /></WithCaret></BigButton>
          <BigButton $w={42}><BigIcon $top={1}><FormatIcon /></BigIcon><span>Format</span><WithCaret><Caret /></WithCaret></BigButton>
        </Group>

        <Group name="Editing" w={187}>
          <Rows $left={3} $w={93}>
            <Row><TextButton><SigmaIcon />AutoSum</TextButton><Spacer /><CaretButton w={18} label="AutoSum options" /></Row>
            <TextButton><FillDownIcon />Fill<Caret /></TextButton>
            <TextButton><EraserIcon />Clear<Caret /></TextButton>
          </Rows>
          <BigButton $w={42}><BigIcon><SortIcon /></BigIcon><span>Sort &amp;</span><WithCaret>Filter<Caret /></WithCaret></BigButton>
          <BigButton $w={44}><BigIcon><FindIcon /></BigIcon><span>Find &amp;</span><WithCaret>Select<Caret /></WithCaret></BigButton>
        </Group>
        <Collapse><IconButton $w={20} $h={14} aria-label="Collapse the ribbon"><ChevronUp /></IconButton></Collapse>
      </Ribbon>

      <FormulaBar>
        <NameBox>
          <input aria-label="Name box" defaultValue="D6" />
          <svg width="7" height="4" viewBox="0 0 7 4"><path d="M0 0h7L3.500 4z" fill="#777" /></svg>
        </NameBox>
        <Dots $m="8px 14px 0 14px" />
        <FormulaButtons>
          <IconButton $w={36} aria-label="Cancel"><svg width="11" height="11" viewBox="0 0 11 11"><path d="M1 1l9 9M10 1l-9 9" stroke="#c0c0c0" strokeWidth="1.800" /></svg></IconButton>
          <IconButton $w={36} aria-label="Enter"><svg width="13" height="11" viewBox="0 0 13 11"><path d="M1 6l3.500 4L12 1" fill="none" stroke="#c0c0c0" strokeWidth="2.200" /></svg></IconButton>
          <IconButton $w={36} aria-label="Insert function">
            <svg width="12" height="14" viewBox="0 0 12 14" fontFamily="Liberation Serif, serif" fontStyle="italic" fontWeight="700" fill="#555"><text x="1" y="11" fontSize="15">f</text><text x="6" y="12" fontSize="12">x</text></svg>
          </IconButton>
        </FormulaButtons>
        <FormulaField>
          <input aria-label="Formula" defaultValue="=B6-C6" />
          <ChevronUp />
        </FormulaField>
      </FormulaBar>

      <Workspace>
        <SheetClip><Worksheet /></SheetClip>
        <VScroll>
          <ScrollButton aria-label="Scroll up"><svg width="7" height="4" viewBox="0 0 7 4"><path d="M0 4h7L3.500 0z" fill="#666" /></svg></ScrollButton>
          <Gap $f={65} />
          <Thumb $dir="v" />
          <Gap $f={87} />
          <ScrollButton aria-label="Scroll down"><svg width="7" height="4" viewBox="0 0 7 4"><path d="M0 0h7L3.500 4z" fill="#666" /></svg></ScrollButton>
        </VScroll>
      </Workspace>

      <SheetBar>
        <SheetNav>
          <IconButton $w={28} aria-label="Previous sheet"><svg width="4" height="8" viewBox="0 0 4 8"><path d="M4 0v8L0 4z" fill={GREEN} /></svg></IconButton>
          <IconButton $w={28} aria-label="Next sheet"><svg width="4" height="8" viewBox="0 0 4 8"><path d="M0 0v8l4-4z" fill="#bdbdbd" /></svg></IconButton>
          <IconButton $w={28} aria-label="More sheets">...</IconButton>
        </SheetNav>
        <SheetTab $w={112} $active>Green Savings</SheetTab>
        <SheetTab $w={179}>Quarterly Revenue - 2018</SheetTab>
        <SheetTab $w={153}>Statement of Income</SheetTab>
        <SheetTab $w={93}>Aggregates</SheetTab>
        <IconButton $w={82} $h={26} aria-label="New sheet">
          <svg width="16" height="16" viewBox="0 0 16 16"><circle cx="8" cy="8" r="7.300" fill="none" stroke="#777" strokeWidth="1.200" /><path d="M4 8h8M8 4v8" stroke="#777" strokeWidth="2" /></svg>
        </IconButton>
        <Spacer />
        <Dots $m="8px 0 0" />
        <HScroll>
          <ScrollButton aria-label="Scroll left"><svg width="4" height="7" viewBox="0 0 4 7"><path d="M4 0v7L0 3.500z" fill="#666" /></svg></ScrollButton>
          <Thumb $dir="h" />
          <Spacer />
          <ScrollButton aria-label="Scroll right"><svg width="4" height="7" viewBox="0 0 4 7"><path d="M0 0v7l4-3.500z" fill="#666" /></svg></ScrollButton>
        </HScroll>
      </SheetBar>

      <StatusBar>
        <span>Ready</span>
        <Spacer />
        <IconButton $w={38} $h={21} $on aria-label="Normal view"><svg width="13" height="13" viewBox="0 0 13 13" shapeRendering="crispEdges"><path d="M.5.500h12v12H.5zM.5 4.500h12M.5 8.500h12M4.500 0v13M8.500 0v13" fill="none" stroke={GREY} /></svg></IconButton>
        <IconButton $w={38} $h={21} aria-label="Page layout view"><svg width="14" height="13" viewBox="0 0 14 13" shapeRendering="crispEdges"><path d="M.5.500h13v12H.5zM3.500 2.500h7v8h-7zM5 4.500h4M5 6.500h4M5 8.500h4" fill="none" stroke={GREY} /></svg></IconButton>
        <IconButton $w={38} $h={21} aria-label="Page break preview"><svg width="14" height="13" viewBox="0 0 14 13" shapeRendering="crispEdges"><path d="M.5.500h13v12H.5zM.5 7.500h9V.5M4.500 0v7" fill="none" stroke={GREY} /></svg></IconButton>
        <IconButton $w={13} $h={21} aria-label="Zoom out"><svg width="6" height="2"><path d="M0 0h6v2H0z" fill="#555" /></svg></IconButton>
        <Zoom type="range" min={0} max={100} defaultValue={65} aria-label="Zoom" />
        <IconButton $w={10} $h={21} aria-label="Zoom in"><svg width="8" height="8"><path d="M0 3h8v2H0zM3 0h2v8H3z" fill="#555" /></svg></IconButton>
        <ZoomValue>190 %</ZoomValue>
      </StatusBar>

      <Taskbar>
        <TaskButton $w={48} aria-label="Start">
          <svg width="17" height="17" viewBox="0 0 17 17"><path d="M0 2.500L7 1.500V8H0zM8 1.300L16.500 0v8H8zM0 9h7v6.500l-7-1zM8 9h8.500v8L8 15.700z" fill="#000" /></svg>
        </TaskButton>
        <Search>
          <svg width="17" height="17" viewBox="0 0 17 17"><circle cx="10.500" cy="6" r="5" fill="none" stroke="#222" strokeWidth="1.200" /><path d="M7 9.500L.8 16" stroke="#222" strokeWidth="1.300" /></svg>
          <input aria-label="Search" placeholder="Type here to search" />
        </Search>
        <TaskButton $w={48} aria-label="Cortana"><svg width="16" height="16" viewBox="0 0 16 16"><circle cx="8" cy="8" r="6.800" fill="none" stroke="#000" strokeWidth="2.200" /></svg></TaskButton>
        <TaskButton $w={48} aria-label="Task view">
          <svg width="16" height="16" viewBox="0 0 16 16" shapeRendering="crispEdges"><path d="M.5 0v3.500h10V0M.5 16v-3.500h10V16M.5 5.500h10v5H.5zM14.500 0v16" fill="none" stroke="#000" /><path d="M13 4h3v3h-3z" fill="#000" /></svg>
        </TaskButton>
        <Apps>
          {tasks.map((t) => <TaskButton key={t.name} aria-label={t.name} $line={t.line} $full={t.full} $bg={t.bg}>{t.icon}</TaskButton>)}
        </Apps>
        <Spacer />
        <Tray>
          <Weather>
            <svg width="20" height="16" viewBox="0 0 20 16"><path d="M4 12c-5 0-5-6-1-6C4 1 11 0 13 4c4-1 7 2 7 5 0 2-2 3-4 3z" fill="#a9d3f5" /><path d="M4 9c0-4 6-6 8-2 2 0 3 5 0 5H6z" fill="#dceefb" /><path d="M10 8c3 4 2 6 0 6s-3-2 0-6z" fill="#2f86d6" /></svg>
            27°C
          </Weather>
          <IconButton $w={18} aria-label="Hidden icons"><svg width="13" height="8" viewBox="0 0 13 8"><path d="M1 7l5.500-5.500L12 7" fill="none" stroke="#111" strokeWidth="1.400" /></svg></IconButton>
          <IconButton $w={28} aria-label="Microphone"><svg width="11" height="16" viewBox="0 0 11 16"><rect x="2.500" width="6" height="11" rx="1" fill="#000" /><path d="M.7 7v5h9.600V7M5.500 12v3M3 15.300h5" fill="none" stroke="#000" strokeWidth="1.200" /></svg></IconButton>
          <IconButton $w={24} aria-label="Battery"><svg width="16" height="12" viewBox="0 0 16 12"><path d="M5 3.500h9v7H5M14 5.500h1.500v3H14M1 0v2M4 0v2M0 2.500h5v2L3.500 6h-2L0 4.500zM2.500 6v4H5" fill="none" stroke="#000" strokeWidth="1.200" /><path d="M7 5h5v4H7z" fill="#000" /></svg></IconButton>
          <IconButton $w={24} aria-label="Network"><svg width="13" height="13" viewBox="0 0 13 13"><path d="M1 12C1 5 6 1 12 1M4 12c0-5 3-8 8-8M7 12c0-3 2-5 5-5" fill="none" stroke="#333" strokeWidth="1.200" /><circle cx="11" cy="11" r="1.500" fill="#000" /></svg></IconButton>
          <IconButton $w={22} aria-label="Volume"><svg width="17" height="14" viewBox="0 0 17 14"><path d="M1 5h2.500L7 2v10L3.500 9H1zM9 5c1 1 1 3 0 4M11 3c2 2 2 6 0 8M13.500 1c3 3 3 9 0 12" fill="none" stroke="#111" strokeWidth="1.200" /></svg></IconButton>
          <Clock>8:11 pm<br />23/06/2021</Clock>
          <IconButton $w={38} aria-label="Notifications"><svg width="16" height="16" viewBox="0 0 16 16"><path d="M0 0h16v12h-5v4l-4-4H0z" fill="#000" /><path d="M3 3.500h10M3 6h10M3 8.500h7" stroke="#e9e2a2" /></svg></IconButton>
          <ShowDesktop aria-label="Show desktop" />
        </Tray>
      </Taskbar>
    </Page>
  );
}
